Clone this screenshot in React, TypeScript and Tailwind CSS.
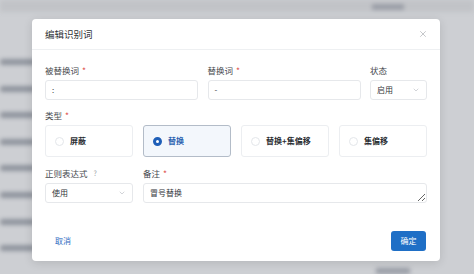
import { ChevronDown, X } from 'lucide-react'

const cjk = { fontFamily: '"Noto Sans CJK SC", "Noto Sans", sans-serif' }

const bgRows = [62, 89, 115, 142, 168, 195, 222, 248]

function Label({ text, required, hint }: { text: string; required?: boolean; hint?: boolean }) {
  return (
    <div className="flex items-center gap-[3px] h-[12px] mb-[4px] text-[8.5px] leading-[12px] text-[#45484d]">
      <span>{text}</span>
      {required && <span className="text-[#e0574f]">*</span>}
      {hint && <span className="ml-[3px] text-[7px] text-[#9aa0a8]">?</span>}
    </div>
  )
}

function Field({ value, select }: { value: string; select?: boolean }) {
  return (
    <div className="h-[20px] flex items-center justify-between border border-[#e6e8eb] rounded-[3px] bg-white px-[6px] text-[8px] text-[#33363b]">
      <span>{value}</span>
      {select && <ChevronDown size={8} strokeWidth={1.5} className="text-[#a4a9b0]" />}
    </div>
  )
}

const types = [
  { name: '屏蔽', active: false },
  { name: '替换', active: true },
  { name: '替换+集偏移', active: false },
  { name: '集偏移', active: false },
]

export default function App() {
  return (
    <div className="relative w-[474px] h-[274px] overflow-hidden bg-[#cdcfd3]" style={cjk}>
      {/* blurred page behind the dialog */}
      <div className="absolute inset-0 blur-[2px]">
        <div className="h-[12px] bg-[#c1c3c7]" />
        {bgRows.map((y) => (
          <div
            key={y}
            className="absolute left-[0px] h-[6px] w-[36px] rounded-sm bg-[#8f949d]"
            style={{ top: y - 3 }}
          />
        ))}
        <div className="absolute left-[372px] top-[4px] h-[6px] w-[32px] bg-[#9a9ea7]" />
        <div className="absolute left-[376px] top-[268px] h-[6px] w-[34px] bg-[#9a9ea7]" />
      </div>

      <div className="absolute left-[32px] top-[19px] w-[408px] h-[242px] bg-white rounded-[4px] shadow-[0_2px_10px_rgba(0,0,0,0.12)] flex flex-col">
        <div className="h-[31px] flex items-center justify-between pl-[13px] pr-[12px] border-b border-[#eef0f2]">
          <span className="text-[9.5px] text-[#303236]">编辑识别词</span>
          <X size={10} strokeWidth={1.2} className="text-[#8c9097]" />
        </div>

        <div className="flex-1 px-[13px] pt-[14px]">
          <div className="grid grid-cols-[153px_153px_1fr] gap-x-[9.5px]">
            <div>
              <Label text="被替换词" required />
              <Field value=":" />
            </div>
            <div>
              <Label text="替换词" required />
              <Field value="-" />
            </div>
            <div>
              <Label text="状态" />
              <Field value="启用" select />
            </div>
          </div>

          <div className="mt-[9px]">
            <Label text="类型" required />
            <div className="grid grid-cols-4 gap-x-[10px]">
              {types.map((t) => (
                <div
                  key={t.name}
                  className={
                    t.active
                      ? 'h-[32px] flex items-center gap-[6px] pl-[9px] rounded-[3px] border border-[#b3bcc8] bg-[#f3f7fc]'
                      : 'h-[32px] flex items-center gap-[6px] pl-[9px] rounded-[3px] border border-[#eceef1] bg-white'
                  }
                >
                  {t.active ? (
                    <span className="w-[9px] h-[9px] rounded-full border-[3px] border-[#1f5fb8] bg-white" />
                  ) : (
                    <span className="w-[9px] h-[9px] rounded-full border border-[#e3e6ea] bg-white" />
                  )}
                  <span
                    className={
                      t.active
                        ? 'text-[8px] font-bold text-[#2a62b0]'
                        : 'text-[8px] font-bold text-[#2a2d32]'
                    }
                  >
                    {t.name}
                  </span>
                </div>
              ))}
            </div>
          </div>

          <div className="mt-[10px] grid grid-cols-[88px_1fr] gap-x-[10px]">
            <div>
              <Label text="正则表达式" hint />
              <Field value="使用" select />
            </div>
            <div>
              <Label text="备注" required />
              <textarea
                defaultValue="冒号替换"
                rows={1}
                className="block w-full h-[20px] min-h-[20px] border border-[#e6e8eb] rounded-[3px] px-[6px] py-[3px] text-[8px] leading-[12px] text-[#33363b] outline-none"
                style={cjk}
              />
            </div>
          </div>
        </div>

        <div className="flex items-center justify-between pl-[23px] pr-[14px] pb-[10px]">
          <span className="text-[8px] text-[#2f6bbf]">取消</span>
          <button className="w-[35px] h-[20px] rounded-[3px] bg-[#1f6fc6] text-white text-[8px]" style={cjk}>
            确定
          </button>
        </div>
      </div>
    </div>
  )
}
